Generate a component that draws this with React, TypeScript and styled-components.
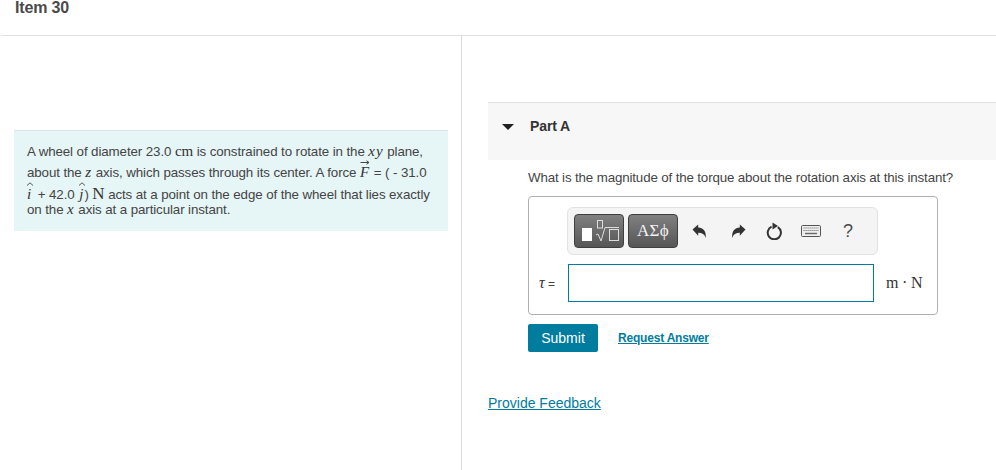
import React from "react";
import styled, { createGlobalStyle } from "styled-components";

const Global = createGlobalStyle`
  html, body { margin: 0; padding: 0; background: #fff; }
  body { font-family: "Liberation Sans", Arial, sans-serif; color: #333; }
`;

const Page = styled.div`
  width: 996px;
  height: 470px;
  overflow: hidden;
  display: flex;
  flex-direction: column;
`;
const Header = styled.header`
  height: 35px;
  flex: none;
  margin-left: 1px;
  border-bottom: 1px solid #e0e0e0;
  padding-left: 14px;
`;
const Title = styled.h1`
  margin: 0;
  font-size: 16px;
  line-height: 16px;
  font-weight: 700;
  color: #4a4a4a;
  letter-spacing: -0.15px;
`;
const Columns = styled.main`
  flex: 1;
  display: flex;
`;
const LeftColumn = styled.section`
  width: 462px;
  flex: none;
  box-sizing: border-box;
  border-right: 1px solid #dcdcdc;
  padding: 94px 13px 0 14px;
`;
const Problem = styled.div`
  height: 101px;
  box-sizing: border-box;
  background: #e6f5f6;
  border-top: 1px solid #dbe6e8;
  padding: 10px 0 0 13px;
  font-size: 13.33px;
  color: #444;
  letter-spacing: -0.1px;
`;
const Line = styled.div<{ $h: number }>`
  height: ${(p) => p.$h}px;
  line-height: ${(p) => p.$h}px;
  white-space: nowrap;
`;
const Mi = styled.span`
  font-family: "Liberation Serif", serif;
  font-style: italic;
  font-size: 15px;
  letter-spacing: 1px;
  color: #333;
`;
const Mr = styled.span<{ $big?: boolean }>`
  font-family: "Liberation Serif", serif;
  font-size: ${(p) => (p.$big ? 17 : 15)}px;
  color: #333;
`;
const Accented = styled.span`
  position: relative;
  display: inline-block;
`;
const AccentMark = styled.svg`
  position: absolute;
  left: 50%;
  top: -2px;
  transform: translateX(-50%);
`;
const Gap = styled.span<{ $w: number }>`
  display: inline-block;
  width: ${(p) => p.$w}px;
`;
const RightColumn = styled.section`
  flex: 1;
  padding: 66px 0 0 26px;
`;
const PartHeader = styled.div`
  height: 58px;
  box-sizing: border-box;
  background: #f7f7f7;
  border-top: 1px solid #e0e0e0;
  display: flex;
  padding: 15px 0 0 14px;
  align-items: flex-start;
`;
const Caret = styled.span`
  width: 0;
  height: 0;
  margin-top: 6px;
  border-left: 6px solid transparent;
  border-right: 6px solid transparent;
  border-top: 6px solid #222;
`;
const PartTitle = styled.h2`
  margin: 0 0 0 16px;
  font-size: 14px;
  line-height: 17px;
  font-weight: 700;
  color: #333;
  letter-spacing: -0.1px;
`;
const PartBody = styled.div`
  padding: 9px 0 0 40px;
`;
const Question = styled.p`
  margin: 0;
  font-size: 13.33px;
  line-height: 18px;
  color: #444;
  letter-spacing: -0.14px;
`;
const AnswerCard = styled.div`
  margin-top: 9px;
  width: 410px;
  height: 119px;
  box-sizing: border-box;
  border: 1px solid #b0b0b0;
  border-radius: 4px;
  padding: 10px 0 0 38px;
`;
const Toolbar = styled.div`
  width: 311px;
  height: 48px;
  box-sizing: border-box;
  background: #f4f4f4;
  border: 1px solid #e2e2e2;
  border-radius: 6px;
  display: flex;
  align-items: center;
  padding-left: 6px;
`;
const PaletteButton = styled.div`
  width: 50px;
  height: 34px;
  flex: none;
  box-sizing: border-box;
  margin-right: 4px;
  border: 1px solid #3f3f3f;
  border-radius: 4px;
  background: linear-gradient(#808080, #565656);
  color: #f2f2f2;
  display: flex;
  align-items: center;
  justify-content: center;
  font-family: "Liberation Serif", serif;
  font-size: 17px;
  letter-spacing: 0.3px;
`;
const ToolIcon = styled.div<{ $w: number }>`
  width: ${(p) => p.$w}px;
  flex: none;
  display: flex;
  justify-content: center;
  align-items: center;
  color: #333;
`;
const Help = styled.span`
  font-size: 18px;
  color: #4a4a4a;
`;
const AnswerRow = styled.div`
  margin-top: 9px;
  display: flex;
  align-items: center;
  margin-left: -28px;
`;
const VarLabel = styled.label`
  width: 29px;
  flex: none;
  font-size: 12px;
  font-family: "Liberation Sans", sans-serif;
  color: #444;
  white-space: nowrap;
`;
const Tau = styled.i`
  font-family: "Liberation Serif", serif;
  font-size: 16px;
  color: #333;
`;
const TextBox = styled.div`
  width: 306px;
  height: 38px;
  flex: none;
  box-sizing: border-box;
  border: 1px solid #007c9e;
  background: #fff;
`;
const Unit = styled.span`
  margin-left: 12px;
  font-family: "Liberation Serif", serif;
  font-size: 16px;
  letter-spacing: -0.2px;
  color: #333;
  white-space: nowrap;
`;
const Actions = styled.div`
  margin-top: 9px;
  display: flex;
  align-items: center;
`;
const SubmitButton = styled.button`
  width: 70px;
  height: 28px;
  border: 0;
  border-radius: 2px;
  background: #007c9e;
  color: #fff;
  font-family: inherit;
  font-size: 14px;
  padding: 0;
`;
const RequestLink = styled.a`
  margin-left: 20px;
  font-size: 12px;
  font-weight: 700;
  letter-spacing: -0.2px;
  color: #007c9e;
  text-decoration: underline;
`;
const Feedback = styled.a`
  display: block;
  margin-top: 43px;
  font-size: 14px;
  line-height: 16px;
  color: #007c9e;
  text-decoration: underline;
`;

const TemplateIcon = () => (
  <svg width="46" height="28" viewBox="0 0 46 28" fill="none">
    <rect x="6" y="11" width="10" height="13" fill="#fff" />
    <rect x="21.5" y="3.5" width="5" height="7.5" stroke="#ddd" />
    <path d="M20 18l2-1 3 7 4-13.5h14" stroke="#ddd" strokeWidth="1" />
    <rect x="33.5" y="12.5" width="9" height="11" stroke="#ddd" />
  </svg>
);
const Undo = () => (
  <svg width="15" height="15" viewBox="0 0 15 15">
    <path d="M0.5 5.5L6.2 0.5v3c5 .3 8.4 3.6 7.4 10.5-.9-3.6-3.4-5.2-7.4-5.2v3z" fill="#333" />
  </svg>
);
const Redo = () => (
  <svg width="15" height="15" viewBox="0 0 15 15">
    <path d="M14.5 5.5L8.8 0.5v3c-5 .3-8.4 3.6-7.4 10.5.9-3.6 3.4-5.2 7.4-5.2v3z" fill="#333" />
  </svg>
);
const Reset = () => (
  <svg width="17" height="18" viewBox="0 0 17 18" fill="none">
    <path d="M11.8 5.1a6.6 6.6 0 1 1-6.2-.4" stroke="#333" strokeWidth="2" />
    <path d="M6.5 0.5L12 4 6.5 7.6z" fill="#333" />
  </svg>
);
const Keyboard = () => (
  <svg width="20" height="12" viewBox="0 0 20 12" fill="none">
    <rect x="0.5" y="0.5" width="19" height="11" rx="1" fill="#eee" stroke="#555" />
    <path d="M2.5 3h15M2.5 5.5h15" stroke="#777" strokeWidth="1.2" strokeDasharray="1.2 .8" />
    <path d="M4 8.5h12" stroke="#666" strokeWidth="1.4" />
  </svg>
);
const Hat = () => (
  <AccentMark width="7" height="4" viewBox="0 0 7 4" fill="none">
    <path d="M0.5 3.5L3.5 0.8l3 2.7" stroke="#444" strokeWidth="0.9" />
  </AccentMark>
);
const Arrow = () => (
  <AccentMark width="10" height="5" viewBox="0 0 10 5" fill="none">
    <path d="M0.5 2.5h8M6.5 0.7L9 2.5 6.5 4.3" stroke="#333" strokeWidth="0.9" />
  </AccentMark>
);

export default function App() {
  return (
    <Page>
      <Global />
      <Header>
        <Title>Item 30</Title>
      </Header>
      <Columns>
        <LeftColumn>
          <Problem>
            <Line $h={21}>
              A wheel of diameter 23.0 <Mr>cm</Mr> is constrained to rotate in the <Mi>xy</Mi> plane,
            </Line>
            <Line $h={21}>
              about the <Mi>z</Mi> axis, which passes through its center. A force{" "}
              <Accented>
                <Arrow />
                <Mi>F</Mi>
              </Accented>{" "}
              = ( - 31.0
            </Line>
            <Line $h={21}>
              <Accented>
                <Hat />
                <Mi>i</Mi>
              </Accented>
              <Gap $w={2} /> + 42.0 <Gap $w={1} />
              <Accented>
                <Hat />
                <Mi>j</Mi>
              </Accented>
              ) <Mr $big>N</Mr> acts at a point on the edge of the wheel that lies exactly
            </Line>
            <Line $h={10}>
              on the <Mi>x</Mi> axis at a particular instant.
            </Line>
          </Problem>
        </LeftColumn>
        <RightColumn>
          <PartHeader>
            <Caret />
            <PartTitle>Part A</PartTitle>
          </PartHeader>
          <PartBody>
            <Question>What is the magnitude of the torque about the rotation axis at this instant?</Question>
            <AnswerCard>
              <Toolbar>
                <PaletteButton>
                  <TemplateIcon />
                </PaletteButton>
                <PaletteButton>ΑΣϕ</PaletteButton>
                <ToolIcon $w={34}><Undo /></ToolIcon>
                <ToolIcon $w={44}><Redo /></ToolIcon>
                <ToolIcon $w={28}><Reset /></ToolIcon>
                <ToolIcon $w={46}><Keyboard /></ToolIcon>
                <ToolIcon $w={28}><Help>?</Help></ToolIcon>
              </Toolbar>
              <AnswerRow>
                <VarLabel><Tau>τ</Tau> =</VarLabel>
                <TextBox />
                <Unit>m · N</Unit>
              </AnswerRow>
            </AnswerCard>
            <Actions>
              <SubmitButton>Submit</SubmitButton>
              <RequestLink href="#">Request Answer</RequestLink>
            </Actions>
          </PartBody>
          <Feedback href="#">Provide Feedback</Feedback>
        </RightColumn>
      </Columns>
    </Page>
  );
}
